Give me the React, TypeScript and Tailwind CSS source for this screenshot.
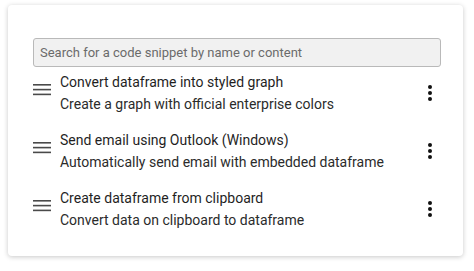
import { useState } from 'react';

type Snippet = { title: string; description: string };

const snippets: Snippet[] = [
  { title: 'Convert dataframe into styled graph', description: 'Create a graph with official enterprise colors' },
  { title: 'Send email using Outlook (Windows)', description: 'Automatically send email with embedded dataframe' },
  { title: 'Create dataframe from clipboard', description: 'Convert data on clipboard to dataframe' },
];

function DragHandle() {
  return (
    <svg width="18" height="12" viewBox="0 0 18 12" className="shrink-0">
      <rect x="0" y="0" width="18" height="1.6" fill="#4a4a4a" />
      <rect x="0" y="4.8" width="18" height="1.6" fill="#4a4a4a" />
      <rect x="0" y="9.6" width="18" height="1.6" fill="#4a4a4a" />
    </svg>
  );
}

function MoreIcon() {
  return (
    <svg width="6" height="18" viewBox="0 0 6 18">
      <circle cx="3" cy="3" r="2" fill="#111" />
      <circle cx="3" cy="9" r="2" fill="#111" />
      <circle cx="3" cy="15" r="2" fill="#111" />
    </svg>
  );
}

export default function App() {
  const [query, setQuery] = useState('');

  return (
    <div className="w-[474px] h-[271px] bg-white pt-[5px] pl-[8px] font-['Roboto',sans-serif]">
      <div className="w-[455px] h-[251px] bg-white rounded-[4px] shadow-[0_1px_5px_rgba(0,0,0,0.22)] pt-[33px] pl-[25px] pr-[22px]">
        {/* Search */}
        <input
          value={query}
          onChange={e => setQuery(e.target.value)}
          placeholder="Search for a code snippet by name or content"
          className="w-[408px] h-[29px] bg-[#f1f1f1] border border-[#b9b9b9] rounded-[3px] px-[6px] text-[13px] text-[#222] placeholder:text-[#6b6b6b] outline-none"
        />

        {/* Snippet list */}
        <div className="flex flex-col gap-[14px] mt-[4px]">
          {snippets.map(s => (
            <div key={s.title} className="flex items-center">
              <div className="w-[27px] -mt-[7px] flex">
                <DragHandle />
              </div>
              <div className="flex-auto leading-[22px] text-[14px] text-[#1f1f1f]">
                <div>{s.title}</div>
                <div className="text-[#2b2b2b]">{s.description}</div>
              </div>
              <div className="w-[20px] flex justify-center mr-[1px]">
                <MoreIcon />
              </div>
            </div>
          ))}
        </div>
      </div>
    </div>
  );
}
